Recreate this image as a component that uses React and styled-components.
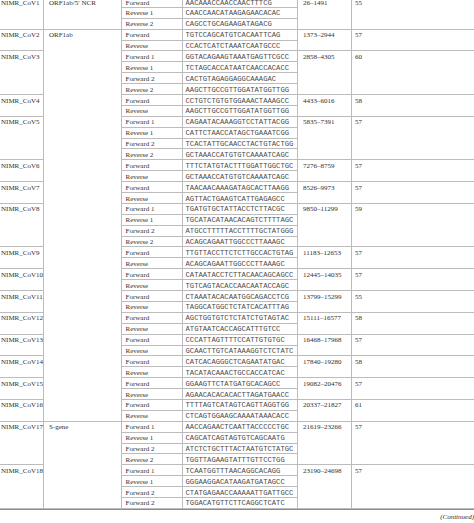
import React from 'react';
import styled, { createGlobalStyle } from 'styled-components';

const LINE = '#bcbcbc';
const INK = '#2f2f2f';

const GlobalStyle = createGlobalStyle`
  html, body {
    margin: 0;
    padding: 0;
    background: #fff;
  }
  body {
    width: 474px;
    height: 523px;
    overflow: hidden;
  }
`;

const Page = styled.div`
  width: 474px;
  overflow: hidden;
  font-family: 'Liberation Serif', 'Times New Roman', serif;
  color: ${INK};
`;

// the screenshot crops the first row a little at the top
const Table = styled.div`
  display: grid;
  grid-template-columns: 44px 78px 61px 115px 54px 1fr;
  grid-auto-rows: 10.9px;
  margin-top: -3px;
  border-bottom: 1px solid #8c8c8c;
`;

const Cell = styled.div`
  grid-column: ${(p) => p.$col};
  grid-row: ${(p) => p.$row} / span ${(p) => p.$span || 1};
  box-sizing: border-box;
  padding: 1.5px 0 0 ${(p) => p.$pad}px;
  border-bottom: 1px solid ${LINE};
  border-right: ${(p) => (p.$last ? 'none' : `1px solid ${LINE}`)};
  font-size: 7px;
  line-height: 8px;
  white-space: nowrap;
  overflow: hidden;
`;

const SeqCell = styled(Cell)`
  font-family: 'Liberation Mono', 'Courier New', monospace;
  font-size: 7.2px;
  color: #4a4a4a;
`;

const Footer = styled.div`
  text-align: right;
  font-style: italic;
  font-size: 7px;
  line-height: 8px;
  padding-top: 3px;
`;

const groups = [
  { name: 'NIMR_CoV1', pos: '26–1491', tm: '55', primers: [
    ['Forward', 'AACAAACCAACCAACTTTCG'],
    ['Reverse 1', 'CAACCAACATAAGAGAACACAC'],
    ['Reverse 2', 'CAGCCTGCAGAAGATAGACG'],
  ] },
  { name: 'NIMR_CoV2', pos: '1373–2944', tm: '57', primers: [
    ['Forward', 'TGTCCAGCATGTCACAATTCAG'],
    ['Reverse', 'CCACTCATCTAAATCAATGCCC'],
  ] },
  { name: 'NIMR_CoV3', pos: '2858–4305', tm: '60', primers: [
    ['Forward 1', 'GGTACAGAAGTAAATGAGTTCGCC'],
    ['Reverse 1', 'TCTAGCACCATAATCAACCACACC'],
    ['Forward 2', 'CACTGTAGAGGAGGCAAAGAC'],
    ['Reverse 2', 'AAGCTTGCCGTTGGATATGGTTGG'],
  ] },
  { name: 'NIMR_CoV4', pos: '4433–6016', tm: '58', primers: [
    ['Forward', 'CCTGTCTGTGTGGAAACTAAAGCC'],
    ['Reverse', 'AAGCTTGCCGTTGGATATGGTTGG'],
  ] },
  { name: 'NIMR_CoV5', pos: '5835–7391', tm: '57', primers: [
    ['Forward 1', 'CAGAATACAAAGGTCCTATTACGG'],
    ['Reverse 1', 'CATTCTAACCATAGCTGAAATCGG'],
    ['Forward 2', 'TCACTATTGCAACCTACTGTACTGG'],
    ['Reverse 2', 'GCTAAACCATGTGTCAAAATCAGC'],
  ] },
  { name: 'NIMR_CoV6', pos: '7276–8759', tm: '57', primers: [
    ['Forward', 'TTTCTATGTACTTTGGATTGGCTGC'],
    ['Reverse', 'GCTAAACCATGTGTCAAAATCAGC'],
  ] },
  { name: 'NIMR_CoV7', pos: '8526–9973', tm: '57', primers: [
    ['Forward', 'TAACAACAAAGATAGCACTTAAGG'],
    ['Reverse', 'AGTTACTGAAGTCATTGAGAGCC'],
  ] },
  { name: 'NIMR_CoV8', pos: '9850–11299', tm: '59', primers: [
    ['Forward 1', 'TGATGTGCTATTACCTCTTACGC'],
    ['Reverse 1', 'TGCATACATAACACAGTCTTTTAGC'],
    ['Forward 2', 'ATGCCTTTTTACCTTTTGCTATGGG'],
    ['Reverse 2', 'ACAGCAGAATTGGCCCTTAAAGC'],
  ] },
  { name: 'NIMR_CoV9', pos: '11183–12653', tm: '57', primers: [
    ['Forward', 'TTGTTACCTTCTCTTGCCACTGTAG'],
    ['Reverse', 'ACAGCAGAATTGGCCCTTAAAGC'],
  ] },
  { name: 'NIMR_CoV10', pos: '12445–14035', tm: '57', primers: [
    ['Forward', 'CATAATACCTCTTACAACAGCAGCC'],
    ['Reverse', 'TGTCAGTACACCAACAATACCAGC'],
  ] },
  { name: 'NIMR_CoV11', pos: '13799–15299', tm: '55', primers: [
    ['Forward', 'CTAAATACACAATGGCAGACCTCG'],
    ['Reverse', 'TAGGCATGGCTCTATCACATTTAG'],
  ] },
  { name: 'NIMR_CoV12', pos: '15111–16577', tm: '58', primers: [
    ['Forward', 'AGCTGGTGTCTCTATCTGTAGTAC'],
    ['Reverse', 'ATGTAATCACCAGCATTTGTCC'],
  ] },
  { name: 'NIMR_CoV13', pos: '16468–17968', tm: '57', primers: [
    ['Forward', 'CCCATTAGTTTTCCATTGTGTGC'],
    ['Reverse', 'GCAACTTGTCATAAAGGTCTCTATC'],
  ] },
  { name: 'NIMR_CoV14', pos: '17840–19280', tm: '58', primers: [
    ['Forward', 'CATCACAGGGCTCAGAATATGAC'],
    ['Reverse', 'TACATACAAACTGCCACCATCAC'],
  ] },
  { name: 'NIMR_CoV15', pos: '19082–20476', tm: '57', primers: [
    ['Forward', 'GGAAGTTCTATGATGCACAGCC'],
    ['Reverse', 'AGAACACACACACTTAGATGAACC'],
  ] },
  { name: 'NIMR_CoV16', pos: '20337–21827', tm: '61', primers: [
    ['Forward', 'TTTTAGTCATAGTCAGTTAGGTGG'],
    ['Reverse', 'CTCAGTGGAAGCAAAATAAACACC'],
  ] },
  { name: 'NIMR_CoV17', pos: '21619–23266', tm: '57', primers: [
    ['Forward 1', 'AACCAGAACTCAATTACCCCCTGC'],
    ['Reverse 1', 'CAGCATCAGTAGTGTCAGCAATG'],
    ['Forward 2', 'ATCTCTGCTTTACTAATGTCTATGC'],
    ['Reverse 2', 'TGGTTAGAAGTATTTGTTCCTGG'],
  ] },
  { name: 'NIMR_CoV18', pos: '23190–24698', tm: '57', primers: [
    ['Forward 1', 'TCAATGGTTTAACAGGCACAGG'],
    ['Reverse 1', 'GGGAAGGACATAAGATGATAGCC'],
    ['Forward 2', 'CTATGAGAACCAAAAATTGATTGCC'],
    ['Forward 2', 'TGGACATGTTCTTCAGGCTCATC'],
  ] },
];

// gene regions cover whole groups: [label, first group, last group]
const genes = [
  ['ORF1ab/5′ NCR', 0, 0],
  ['ORF1ab', 1, 15],
  ['S-gene', 16, 17],
];

const withRows = () => {
  let row = 1;
  return groups.map((g) => {
    const out = { ...g, row, span: g.primers.length };
    row += g.primers.length;
    return out;
  });
};

const App = () => {
  const rows = withRows();

  return (
    <Page>
      <GlobalStyle />
      <Table>
        {genes.map(([label, from, to]) => {
          const start = rows[from].row;
          const end = rows[to].row + rows[to].span;
          return (
            <Cell key={label} $col={2} $row={start} $span={end - start} $pad={5}>
              {label}
            </Cell>
          );
        })}
        {rows.map((g) => (
          <React.Fragment key={g.name}>
            <Cell $col={1} $row={g.row} $span={g.span} $pad={1}>
              {g.name}
            </Cell>
            {g.primers.map(([dir, seq], i) => (
              <React.Fragment key={i}>
                <Cell $col={3} $row={g.row + i} $pad={3.5}>
                  {dir}
                </Cell>
                <SeqCell $col={4} $row={g.row + i} $pad={2.5}>
                  {seq}
                </SeqCell>
              </React.Fragment>
            ))}
            <Cell $col={5} $row={g.row} $span={g.span} $pad={5}>
              {g.pos}
            </Cell>
            <Cell $col={6} $row={g.row} $span={g.span} $pad={3} $last>
              {g.tm}
            </Cell>
          </React.Fragment>
        ))}
      </Table>
      <Footer>(Continued)</Footer>
    </Page>
  );
};

export default App;
